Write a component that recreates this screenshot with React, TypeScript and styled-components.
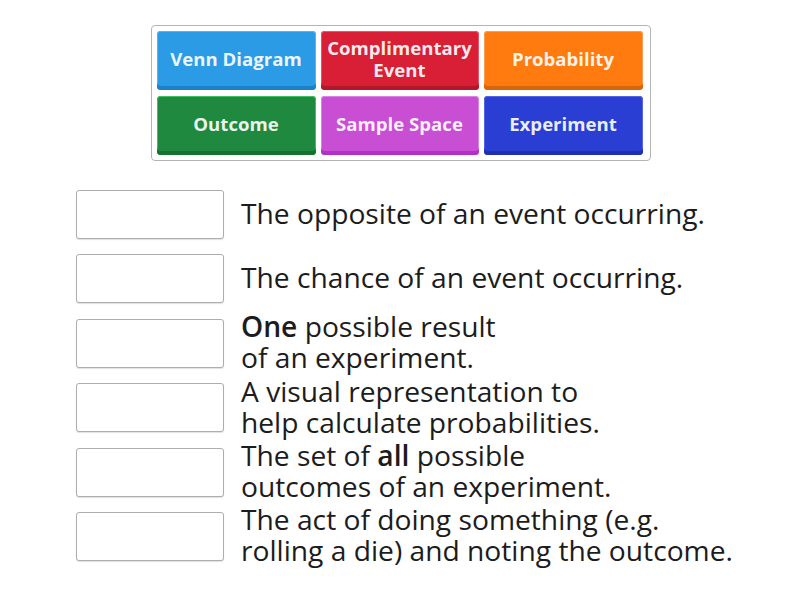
import React from "react";
import styled, { createGlobalStyle } from "styled-components";

const Global = createGlobalStyle`
  html, body { margin: 0; padding: 0; background: #ffffff; }
  body { font-family: "Open Sans", "Liberation Sans", sans-serif; }
`;

const Page = styled.div`
  width: 800px;
  height: 600px;
  padding-top: 25px;
  box-sizing: border-box;
  display: flex;
  flex-direction: column;
  align-items: center;
`;

const Palette = styled.div`
  width: 500px;
  box-sizing: border-box;
  border: 1px solid #b4b4b4;
  border-radius: 4px;
  padding: 5px;
  display: grid;
  grid-template-columns: 159px 158px 159px;
  grid-auto-rows: 59px;
  column-gap: 5px;
  row-gap: 6px;
  margin-left: 1px;
`;

const Tile = styled.div<{ $bg: string; $dark: string; $light: string }>`
  background: ${(p) => p.$bg};
  border-radius: 4px;
  box-shadow: inset 0 -4px 0 ${(p) => p.$dark}, inset 0 1px 0 ${(p) => p.$light},
    inset 1px 0 0 ${(p) => p.$light}, inset -1px 0 0 ${(p) => p.$light};
  color: rgba(255, 255, 255, 0.92);
  font-weight: 700;
  font-size: 18.6px;
  line-height: 22px;
  display: flex;
  align-items: center;
  justify-content: center;
  text-align: center;
  padding-bottom: 3px;
  box-sizing: border-box;
`;

const List = styled.div`
  width: 800px;
  margin-top: 29px;
  padding-left: 76px;
  box-sizing: border-box;
  display: grid;
  grid-template-columns: 148px 1fr;
  grid-auto-rows: 49px;
  column-gap: 17px;
  row-gap: 15.4px;
`;

const Slot = styled.div`
  border: 1px solid #adadad;
  border-radius: 3px;
  background: #fff;
  box-shadow: 0 1px 1px rgba(0, 0, 0, 0.12);
  box-sizing: border-box;
`;

const Desc = styled.div`
  display: flex;
  align-items: center;
  font-size: 28.2px;
  line-height: 31px;
  color: #1c1c1c;
  white-space: nowrap;
  margin-top: -2px;
`;

const B = styled.b`
  font-weight: 600;
`;

const tiles = [
  { t: "Venn Diagram", bg: "#2b9be6", dark: "#1a82c9", light: "#58b5f0" },
  { t: "Complimentary Event", bg: "#d81f36", dark: "#b3172a", light: "#e85565" },
  { t: "Probability", bg: "#ff7a0f", dark: "#d9650a", light: "#ff9c4d" },
  { t: "Outcome", bg: "#1f8a3f", dark: "#16702f", light: "#3fbf63" },
  { t: "Sample Space", bg: "#c84fd3", dark: "#b130c7", light: "#dc82e4" },
  { t: "Experiment", bg: "#2a3ed3", dark: "#1f2fb0", light: "#5465e6" },
];

export default function App() {
  return (
    <>
      <Global />
      <Page>
        <Palette>
          {tiles.map((x) => (
            <Tile key={x.t} $bg={x.bg} $dark={x.dark} $light={x.light}>
              {x.t === "Complimentary Event" ? (
                <span>
                  Complimentary
                  <br />
                  Event
                </span>
              ) : (
                x.t
              )}
            </Tile>
          ))}
        </Palette>
        <List>
          <Slot />
          <Desc>The opposite of an event occurring.</Desc>
          <Slot />
          <Desc>The chance of an event occurring.</Desc>
          <Slot />
          <Desc>
            <span>
              <B>One</B> possible result
              <br />
              of an experiment.
            </span>
          </Desc>
          <Slot />
          <Desc>
            <span>
              A visual representation to
              <br />
              help calculate probabilities.
            </span>
          </Desc>
          <Slot />
          <Desc>
            <span>
              The set of <B>all</B> possible
              <br />
              outcomes of an experiment.
            </span>
          </Desc>
          <Slot />
          <Desc>
            <span>
              The act of doing something (e.g.
              <br />
              rolling a die) and noting the outcome.
            </span>
          </Desc>
        </List>
      </Page>
    </>
  );
}
